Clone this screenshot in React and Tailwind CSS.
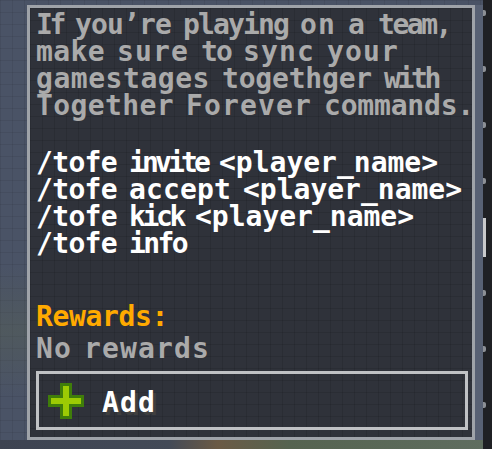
import React from "react";

// Minecraft default font advances (in font pixels, glyph + 1px gap)
const ADV = {
  " ": 4, "'": 2, "’": 2, ",": 2, ".": 2, ":": 2, ";": 2, "!": 2, "|": 2, i: 2,
  l: 3, "`": 3,
  t: 4, I: 4, "[": 4, "]": 4, '"': 4,
  f: 5, k: 5, "<": 5, ">": 5, "(": 5, ")": 5, "*": 5,
  "@": 7, "~": 7,
};

const SCALE = 3;
const MONO_ADV = 0.602 * 28; // DejaVu Sans Mono advance at 28px

// each word gets the width the game font would give it
const McWord = ({ word }) => {
  const chars = [...word];
  const width = chars.reduce((s, c) => s + (ADV[c] || 6), 0) * SCALE;
  const spacing = (width - chars.length * MONO_ADV) / chars.length;
  return (
    <span className="shrink-0 whitespace-nowrap" style={{ width, letterSpacing: spacing }}>
      {word}
    </span>
  );
};

const McLine = ({ text, className = "" }) => (
  <div className={`flex h-[27px] gap-[12px] leading-[27px] ${className}`}>
    {text.split(" ").map((w, i) => (
      <McWord key={i} word={w} />
    ))}
  </div>
);

const PlusIcon = () => (
  <svg width="36" height="36" viewBox="0 0 12 12" shapeRendering="crispEdges">
    <path d="M4 0h4v4h4v4h-4v4h-4v-4h-4v-4h4z" fill="#3f7d0a" />
    <path d="M5 1h2v4h4v2h-4v4h-2v-4h-4v-2h4z" fill="#9ccb04" />
  </svg>
);

const knobs = [10, 66, 122, 178, 290, 346, 402];

export default function App() {
  return (
    <div className="flex h-[449px] w-[492px] overflow-hidden bg-[#4a5366] font-['DejaVu_Sans_Mono',monospace] text-[28px] font-bold">
      <div className="flex w-[483px] flex-col bg-[linear-gradient(to_right,rgba(0,0,0,0.07)_1px,transparent_1px),linear-gradient(to_bottom,rgba(0,0,0,0.07)_1px,transparent_1px)] bg-[size:12px_12px]">
        <div className="h-[5px]" />
        <div className="flex h-[435px]">
          <div className="w-[27px] bg-[linear-gradient(to_bottom,transparent_60%,rgba(90,100,80,0.35)_75%,transparent_90%)]" />
          <div className="flex h-[435px] w-[448px] flex-col border-[3px] border-[#9fa3a9] bg-[#2f323a] bg-[linear-gradient(to_right,rgba(0,0,0,0.1)_1px,transparent_1px),linear-gradient(to_bottom,rgba(0,0,0,0.1)_1px,transparent_1px)] bg-[size:12px_12px] px-[6px] pt-[3px]">
            <div className="text-[#aaaaaa]">
              <McLine text="If you’re playing on a team," />
              <McLine text="make sure to sync your" />
              <McLine text="gamestages togethger with" />
              <McLine text="Together Forever commands." />
            </div>
            <div className="mt-[30px] text-white">
              <McLine text="/tofe invite <player_name>" />
              <McLine text="/tofe accept <player_name>" />
              <McLine text="/tofe kick <player_name>" />
              <McLine text="/tofe info" />
            </div>
            <McLine text="Rewards:" className="mt-[46px] text-[#ffaa00]" />
            <McLine text="No rewards" className="mt-[5px] text-[#aaaaaa]" />
            <div className="mr-[-2px] mt-[9px] flex h-[59px] items-center border-[3px] border-[#c0c2c5] pl-[9px]">
              <PlusIcon />
              <McLine text="Add" className="ml-[18px] mt-[4px] text-white [text-shadow:3px_3px_0_#3f3f3f]" />
            </div>
          </div>
          <div className="w-[8px] bg-[#586174]" />
        </div>
        <div className="h-[9px] bg-[linear-gradient(to_right,#3d4351_0%,#434a57_35%,#6b5a45_45%,#556350_60%,#5f6d5f_100%)]" />
      </div>
      <div className="relative w-[9px] bg-[#1f2024]">
        {knobs.map((y) => (
          <div key={y} className="absolute left-0 h-[6px] w-[3px] rounded-r-[2px] bg-[#8d9096]" style={{ top: y }} />
        ))}
        <div className="absolute left-0 top-[218px] h-[39px] w-[3px] bg-[#c9cacc]" />
      </div>
    </div>
  );
}
